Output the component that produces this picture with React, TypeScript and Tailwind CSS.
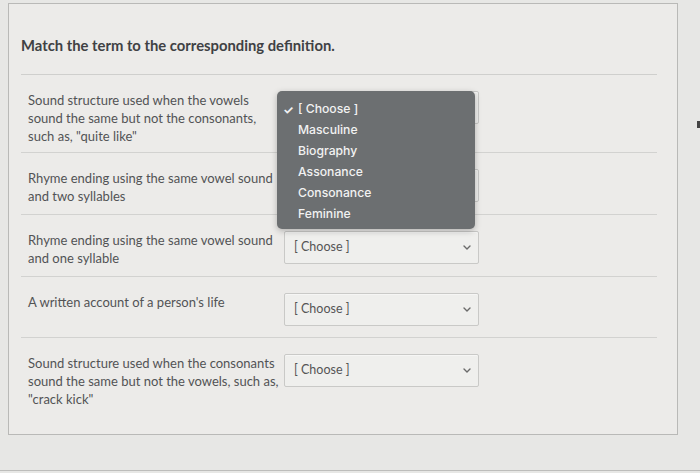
import React from 'react';

const rows = [
  {
    text: ['Sound structure used when the vowels', 'sound the same but not the consonants,', 'such as, "quite like"'],
    h: 'h-[78px]',
  },
  { text: ['Rhyme ending using the same vowel sound', 'and two syllables'], h: 'h-[62px]' },
  { text: ['Rhyme ending using the same vowel sound', 'and one syllable'], h: 'h-[62px]' },
  { text: ["A written account of a person's life"], h: 'h-[61px]' },
  {
    text: ['Sound structure used when the consonants', 'sound the same but not the vowels, such as,', '"crack kick"'],
    h: 'h-[96px]',
  },
];

const options = ['Masculine', 'Biography', 'Assonance', 'Consonance', 'Feminine'];

const Chevron = () => (
  <svg width="8" height="5" viewBox="0 0 8 5" fill="none" className="text-[#6a6a6a]">
    <path d="M1 1l3 3 3-3" stroke="currentColor" strokeWidth="1.4" strokeLinecap="round" strokeLinejoin="round" />
  </svg>
);

const Select = () => (
  <div className="flex h-[33px] w-[195px] items-center justify-between rounded-[2px] border border-[#c9c9c7] bg-[#efefed] pl-[9px] pr-[7px] shadow-[inset_0_1px_0_#f6f6f5]">
    <span className="text-[12.5px] text-[#555]">[ Choose ]</span>
    <Chevron />
  </div>
);

const Menu = () => (
  <div
    className="absolute left-[-7px] top-0 z-10 w-[198px] rounded-[5px] bg-[#6c6f71] pb-[4px] pt-[8px] text-[12.2px] font-medium text-[#f2f2f2] shadow-[0_2px_6px_rgba(0,0,0,0.25)]"
    style={{ fontFamily: 'Inter, "Noto Sans", sans-serif' }}
  >
    <div className="flex h-[21px] items-center pl-[6px]">
      <span className="w-[15px] text-[12px] font-bold">✓</span>
      <span>[ Choose ]</span>
    </div>
    {options.map((o) => (
      <div key={o} className="flex h-[21px] items-center pl-[21px]">
        {o}
      </div>
    ))}
  </div>
);

export default function App() {
  return (
    <div
      className="relative h-[473px] w-[700px] overflow-hidden bg-[#e7e7e5] pt-[3px]"
      style={{ fontFamily: 'Lato, "Open Sans", sans-serif' }}
    >
      <div className="ml-[8px] h-[432px] w-[670px] border border-[#b9b9b7] bg-[#ecebe9] pl-[12px] pr-[20px]">
        <div className="flex h-[71px] items-center border-b border-[#cfcfcd] pt-[12px]">
          <h1 className="text-[14.8px] font-bold text-[#3f4144]">Match the term to the corresponding definition.</h1>
        </div>
        {rows.map((r, i) => (
          <div
            key={i}
            className={`flex items-start pl-[7px] pt-[16px] ${r.h} ${i < rows.length - 1 ? 'border-b border-[#d2d2d0]' : ''}`}
          >
            <div className="w-[256px] text-[13px] leading-[18px] text-[#525355]">
              {r.text.map((t) => (
                <div key={t} className="whitespace-nowrap">
                  {t}
                </div>
              ))}
            </div>
            <div className="relative">
              <Select />
              {i === 0 && <Menu />}
            </div>
          </div>
        ))}
      </div>
      <div className="mt-[35px] h-px w-full bg-[#bdbdbb]" />
      <div className="absolute left-[697px] top-[121px] h-[7px] w-[3px] bg-[#444]" />
    </div>
  );
}
